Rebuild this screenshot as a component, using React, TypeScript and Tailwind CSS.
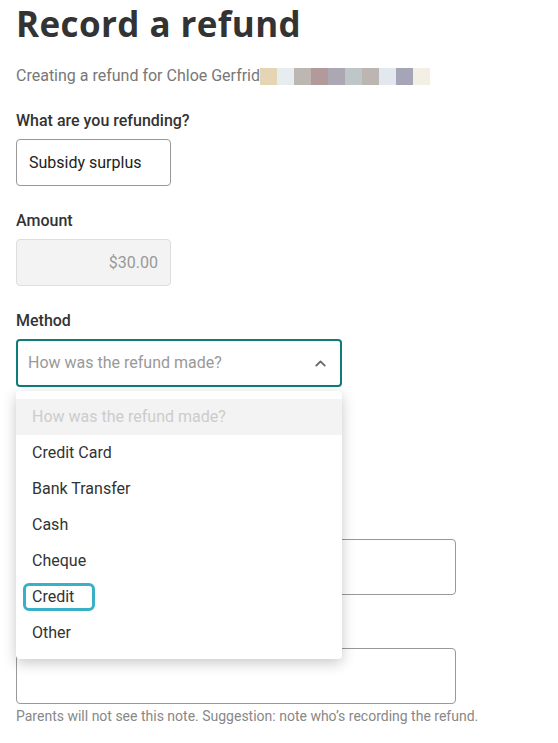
import { ChevronUp } from 'lucide-react'

const SWATCHES = ['#e5d5b5', '#e7ecef', '#bcb7b2', '#b29a9b', '#aba8b3', '#bfc6c8', '#bbb6b2', '#e3e8ef', '#a6a5b7', '#f3efe4']
const METHODS = ['Credit Card', 'Bank Transfer', 'Cash', 'Cheque', 'Credit', 'Other']

function Label({ children }: { children?: React.ReactNode }) {
  return <p className="h-5 mb-2 text-[16px] leading-5 font-medium text-[#333]">{children}</p>
}

export default function App() {
  return (
    <div className="min-h-[743px] bg-white px-4 font-['Roboto',sans-serif] text-[16px]">
      <h1 className="pt-[2px] h-[50px] text-[35px] leading-[44px] font-bold tracking-[0.4px] text-[#333] font-['Open_Sans',sans-serif]">
        Record a refund
      </h1>

      {/* subtitle + redacted surname */}
      <div className="mt-[16px] mb-[25px] flex items-center h-5">
        <span className="text-[#777] leading-5">Creating a refund for Chloe Gerfrid</span>
        <span className="flex">
          {SWATCHES.map((c, i) => (
            <span key={i} className="w-[17px] h-[17px]" style={{ background: c }} />
          ))}
        </span>
      </div>

      <Label>What are you refunding?</Label>
      <div className="w-[155px] h-[47px] mb-[25px] border border-[#999] rounded flex items-center px-3 text-[#222]">
        Subsidy surplus
      </div>

      <Label>Amount</Label>
      <div className="w-[155px] h-[47px] mb-[25px] border border-[#ddd] bg-[#f3f3f3] rounded flex items-center justify-end px-3 text-[#999]">
        $30.00
      </div>

      <Label>Method</Label>
      <div className="relative w-[326px] mb-[24px]">
        <div className="h-[48px] border-2 border-[#0e7c7b] rounded flex items-center justify-between pl-[10px] pr-[11px] text-[#999]">
          <span>How was the refund made?</span>
          <ChevronUp size={17} strokeWidth={2.5} className="text-[#666]" />
        </div>

        {/* open menu */}
        <div className="absolute z-10 left-0 top-[52px] w-[326px] bg-white rounded py-2 shadow-[0_4px_14px_rgba(0,0,0,0.22)]">
          <div className="h-9 flex items-center px-4 bg-[#f3f3f3] text-[#ccc]">How was the refund made?</div>
          {METHODS.map((m) => (
            <div key={m} className="h-9 flex items-center px-[7px] text-[#333]">
              <span
                className={
                  m === 'Credit'
                    ? 'w-[72px] pl-[6px] h-[28px] flex items-center rounded-md border-[3px] border-[#3ab0c8]'
                    : 'px-[9px]'
                }
              >
                {m}
              </span>
            </div>
          ))}
        </div>
      </div>

      {/* fields hidden behind the open menu */}
      <Label />
      <div className="w-[155px] h-[47px] mb-[25px] border border-[#999] rounded" />

      <Label />
      <div className="w-[440px] h-[56px] mb-[25px] border border-[#999] rounded" />

      <Label />
      <div className="w-[440px] h-[56px] border border-[#999] rounded" />
      <p className="mt-[2px] text-[14px] leading-5 text-[#888]">
        Parents will not see this note. Suggestion: note who’s recording the refund.
      </p>
    </div>
  )
}
